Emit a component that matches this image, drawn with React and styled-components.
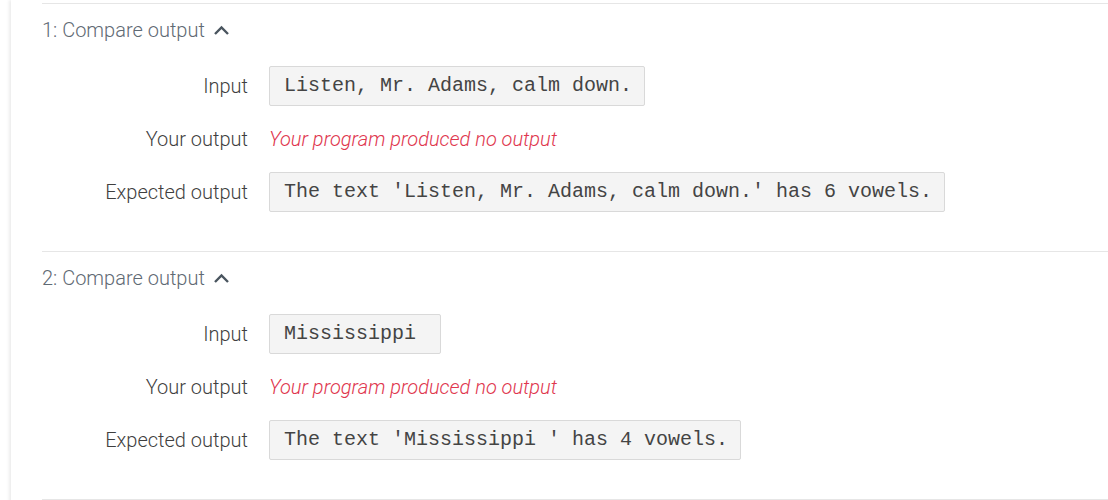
import styled, { createGlobalStyle } from "styled-components";

const GlobalStyle = createGlobalStyle`
  body {
    margin: 0;
    background: #fff;
    font-family: Roboto, "Liberation Sans", sans-serif;
  }
`;

const Page = styled.div`
  padding-left: 11px;
  height: 500px;
  overflow: hidden;
`;

const Card = styled.div`
  background: #fff;
  min-height: 100%;
  padding: 3px 0 0 31px;
  box-shadow: -2px 0 3px rgba(0, 0, 0, 0.08);
`;

const Section = styled.section`
  border-top: 1px solid #e6e6e6;
  padding: 14px 0 39px;
`;

const Heading = styled.div`
  display: flex;
  align-items: center;
  gap: 8px;
  height: 24px;
  font-size: 20px;
  font-weight: 300;
  color: #5f6a74;
  margin-bottom: 24px;
`;

const Rows = styled.div`
  display: flex;
  flex-direction: column;
  gap: 13px;
`;

const Row = styled.div`
  display: flex;
  align-items: center;
  min-height: 40px;
`;

const Label = styled.div`
  width: 206px;
  margin-right: 21px;
  text-align: right;
  font-size: 20px;
  font-weight: 300;
  color: #3f3f3f;
`;

const Code = styled.pre`
  margin: 0;
  padding: 8px 12px 8px 14px;
  background: #f4f4f4;
  border: 1px solid #d9d9d9;
  border-radius: 2px;
  font-family: "Liberation Mono", "Courier New", monospace;
  font-size: 20px;
  line-height: 22px;
  color: #444;
  white-space: pre;
`;

const NoOutput = styled.div`
  font-size: 20px;
  font-weight: 300;
  font-style: italic;
  color: #e0364e;
`;

const Chevron = () => (
  <svg width="17" height="12" viewBox="0 0 17 12">
    <path d="M2 10 L8.5 3.5 L15 10" fill="none" stroke="#4a555f" strokeWidth="2.4" />
  </svg>
);

const tests = [
  {
    input: "Listen, Mr. Adams, calm down.",
    expected: "The text 'Listen, Mr. Adams, calm down.' has 6 vowels.",
  },
  {
    input: "Mississippi ",
    expected: "The text 'Mississippi ' has 4 vowels.",
  },
];

const App = () => (
  <Page>
    <GlobalStyle />
    <Card>
      {tests.map((t, i) => (
        <Section key={i}>
          <Heading>
            {i + 1}: Compare output <Chevron />
          </Heading>
          <Rows>
            <Row>
              <Label>Input</Label>
              <Code>{t.input}</Code>
            </Row>
            <Row>
              <Label>Your output</Label>
              <NoOutput>Your program produced no output</NoOutput>
            </Row>
            <Row>
              <Label>Expected output</Label>
              <Code>{t.expected}</Code>
            </Row>
          </Rows>
        </Section>
      ))}
      <Section />
    </Card>
  </Page>
);

export default App;
